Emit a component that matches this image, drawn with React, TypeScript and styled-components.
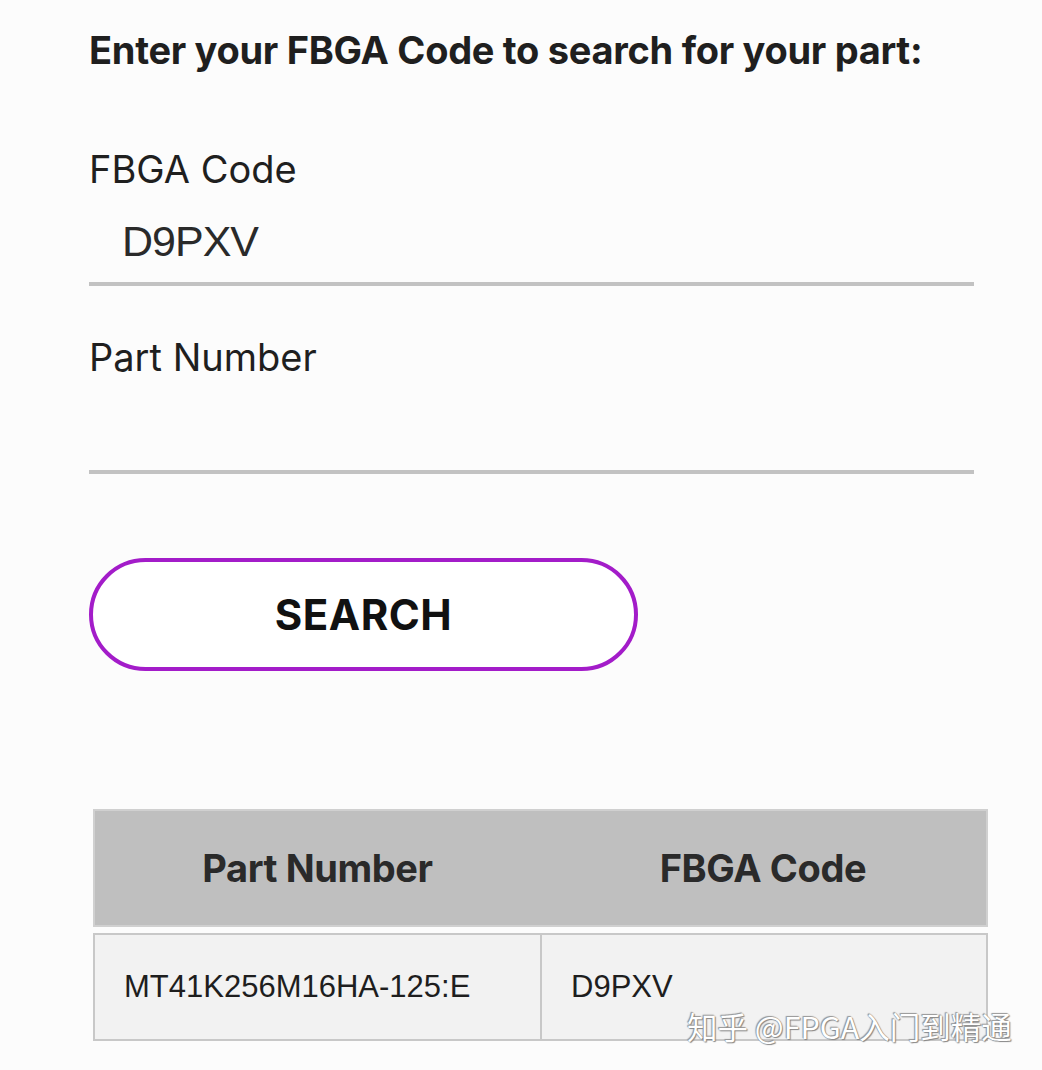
import React from "react";
import styled, { createGlobalStyle } from "styled-components";

const GlobalStyle = createGlobalStyle`
  html, body {
    margin: 0;
    padding: 0;
    background: #fcfcfc;
  }
  body {
    font-family: "Inter", "Liberation Sans", sans-serif;
    color: #222;
  }
`;

const Page = styled.div`
  position: relative;
  width: 1042px;
  height: 1070px;
  overflow: hidden;
  padding: 27px 0 0 89px;
  box-sizing: border-box;
`;

const Heading = styled.h2`
  margin: 0;
  font-size: 38px;
  font-weight: 700;
  line-height: 46px;
  color: #1f1f1f;
  letter-spacing: -0.3px;
`;

const Field = styled.div<{ $top: number }>`
  width: 885px;
  margin-top: ${(p) => p.$top}px;
  display: flex;
  flex-direction: column;
`;

const Label = styled.label`
  font-size: 38px;
  line-height: 46px;
  color: #1f1f1f;
`;

const Input = styled.input`
  border: none;
  border-bottom: 4px solid #c2c2c2;
  background: transparent;
  outline: none;
  height: 94px;
  padding: 8px 0 0 33px;
  font-family: "Liberation Sans", sans-serif;
  font-size: 43px;
  letter-spacing: -1px;
  color: #2a2a2a;
  box-sizing: border-box;
`;

const SearchButton = styled.button`
  margin-top: 84px;
  width: 549px;
  height: 113px;
  border: 4px solid #a31cc9;
  border-radius: 60px;
  background: #fff;
  font-family: "Inter", sans-serif;
  font-weight: 700;
  font-size: 42px;
  color: #111;
  letter-spacing: 0.5px;
  cursor: pointer;
`;

const Table = styled.div`
  margin: 138px 0 0 4px;
  width: 895px;
  display: flex;
  flex-direction: column;
  gap: 6px;
`;

const Row = styled.div<{ $head?: boolean }>`
  display: grid;
  grid-template-columns: 445px 1fr;
  height: ${(p) => (p.$head ? 118 : 108)}px;
  background: ${(p) => (p.$head ? "#bfbfbf" : "#f2f2f2")};
  border: 2px solid ${(p) => (p.$head ? "#d0d0d0" : "#c8c8c8")};
  box-sizing: border-box;
`;

const HeadCell = styled.div`
  display: flex;
  align-items: center;
  justify-content: center;
  font-size: 38px;
  font-weight: 700;
  color: #2a2a2a;
  letter-spacing: -0.4px;
`;

const Cell = styled.div<{ $divider?: boolean }>`
  display: flex;
  align-items: center;
  padding-left: 29px;
  font-family: "Liberation Sans", sans-serif;
  font-size: 31px;
  color: #1e1e1e;
  border-left: ${(p) => (p.$divider ? "2px solid #c8c8c8" : "none")};
`;

const Watermark = styled.div`
  position: absolute;
  left: 687px;
  top: 1004px;
  font-family: "Noto Sans CJK SC", "Liberation Sans", sans-serif;
  font-size: 30.5px;
  color: #fff;
  text-shadow: 0 0 1px #777, 1px 1px 1px #888, -1px -1px 1px #999;
  white-space: nowrap;
`;

export default function App() {
  return (
    <Page>
      <GlobalStyle />
      <Heading>Enter your FBGA Code to search for your part:</Heading>
      <Field $top={73}>
        <Label>FBGA Code</Label>
        <Input defaultValue="D9PXV" />
      </Field>
      <Field $top={48}>
        <Label>Part Number</Label>
        <Input defaultValue="" />
      </Field>
      <SearchButton>SEARCH</SearchButton>
      <Table>
        <Row $head>
          <HeadCell>Part Number</HeadCell>
          <HeadCell>FBGA Code</HeadCell>
        </Row>
        <Row>
          <Cell>MT41K256M16HA-125:E</Cell>
          <Cell $divider>D9PXV</Cell>
        </Row>
      </Table>
      <Watermark>知乎 @FPGA入门到精通</Watermark>
    </Page>
  );
}
